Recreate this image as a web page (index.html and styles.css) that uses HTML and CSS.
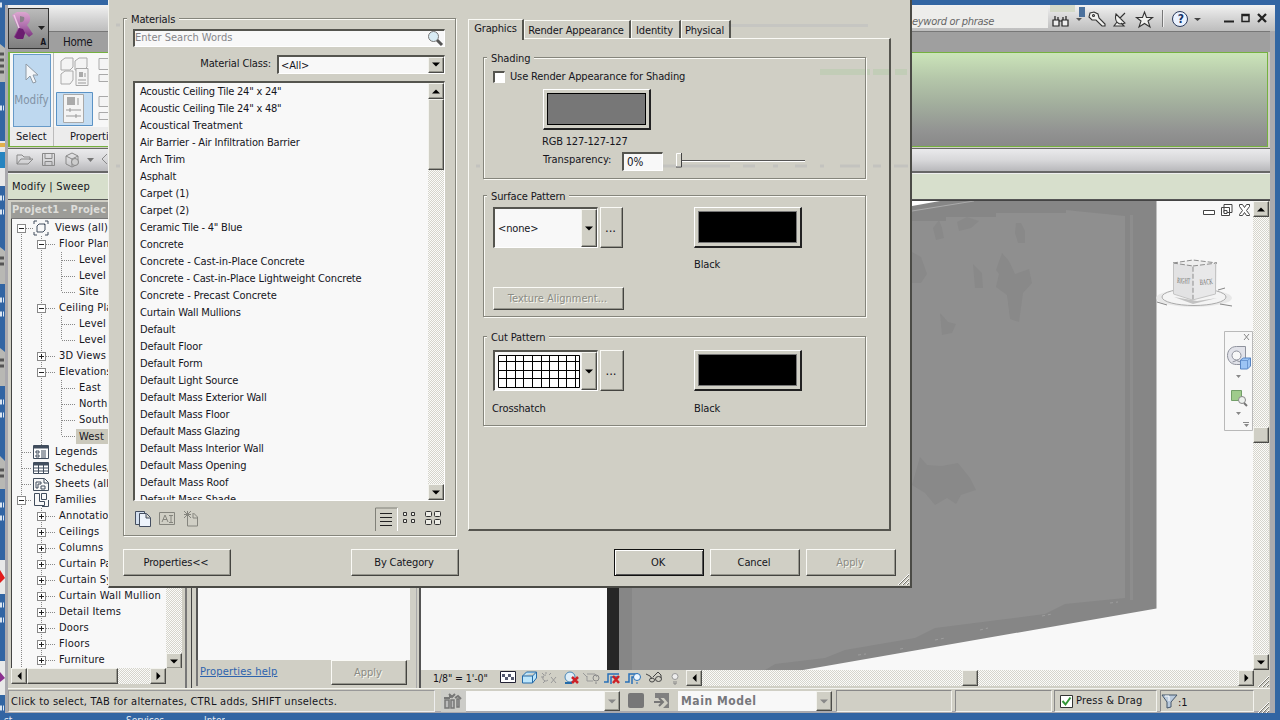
FILE: index.html
```html
<!DOCTYPE html>
<html lang="en">
<head>
<meta charset="utf-8">
<title>Materials</title>
<link rel="stylesheet" href="styles.css">
</head>
<body>
<svg class="defs" width="0" height="0">
  <symbol id="up" viewBox="0 0 8 5"><path d="M0 4.5 4 .5 8 4.5z"/></symbol>
  <symbol id="down" viewBox="0 0 8 5"><path d="M0 .5 4 4.5 8 .5z"/></symbol>
  <symbol id="left" viewBox="0 0 5 8"><path d="M4.5 0 .5 4 4.5 8z"/></symbol>
  <symbol id="right" viewBox="0 0 5 8"><path d="M.5 0 4.5 4 .5 8z"/></symbol>
  <symbol id="grip" viewBox="0 0 12 12"><path d="M1 12 12 1M5 12l7-7M9 12l3-3" stroke="#fff" fill="none"/><path d="M2 12 12 2M6 12l6-6M10 12l2-2" stroke="#77776f" fill="none"/></symbol>
</svg>
<div class="desktop">
  <svg class="desk-icons" width="6" height="720">
    <path d="M0 5h3M0 108h4M0 300h4M0 314h4M0 402h4M0 415h4M0 505h4M0 518h4M0 605h4M0 620h4M0 198h4M0 212h4M0 708h4" stroke="#dce6f2" stroke-width="5" stroke-dasharray="2 1"/>
    <path d="M0 44l5 4v34H0zM0 247l5 4v33H0zM0 348l5 4v34H0zM0 456l5 5v28H0z" fill="#b8b8b4"/><path d="M0 54h4M0 60h4M0 66h4M0 72h4M0 258h4M0 264h4M0 360h4M0 366h4M0 470h4M0 476h4" stroke="#555" stroke-width="3"/>
    <path d="M0 141h5v45H0zM0 560h5v34H0zM0 661h5v34H0z" fill="#e8e8e8"/><path d="M0 152h5v16H0z" fill="#2684c0"/><path d="M0 143h5v4H0z" fill="#e0b04a"/><path d="M0 570l5 8-5 5z" fill="#e21b1b"/><path d="M0 672l5 6-5 4z" fill="#8b2f8f"/>
  </svg>
  <div class="taskstrip"><span>st</span><span>Services</span><span>Inter</span></div>
  <div class="app">
    <header class="titlebar">
      <div class="search-help">eyword or phrase</div>
      <svg class="title-icons" width="225" height="26" viewBox="1050 5 225 26">
        <path d="M1013 5h62v7h-62z" fill="#d4dac9"/><path d="M1079 7h6v10h-6z" fill="#4b719d"/>
        <g fill="#eee" stroke="#222" stroke-width="1.2"><path d="M1053 20h6v6h-6zM1062 20h6v6h-6zM1055 20v-4M1058 20v-3M1063 20v-3M1066 20v-4M1059 21h3"/></g>
        <path d="M1076 18h6l-3 3z" fill="#555"/>
        <g fill="#f0f0ee" stroke="#333" stroke-width="1.1"><path d="M1090 13l4-1 4 2 1 4 6 6v2h-3l-6-6-4 0-3-3z"/><circle cx="1093.500" cy="15.500" r="1"/><path d="M1116 14l9 9c-6 3-11-1-9-9zM1120 18l5-5M1117 22l-3 4h10l-3-3"/><path d="M1144.500 12l2 5.500h6l-4.500 3.500 2 6-5.500-3.500-5.500 3.500 2-6-4.500-3.500h6z"/></g>
        <path d="M1162.500 10v17" stroke="#777"/><path d="M1163.500 10v17" stroke="#eee"/>
        <circle cx="1180" cy="19" r="7.500" fill="#eaf2ff" stroke="#2c3b5c"/><path d="M1194 18h7l-3.500 3z" fill="#444"/>
        <path d="M1224 21.500h10" stroke="#222" stroke-width="2"/><path d="M1242 14.500h7v7h-7zM1242 15.500h7" fill="none" stroke="#222" stroke-width="1.500"/><path d="M1258 14l8 8M1266 14l-8 8" stroke="#222" stroke-width="2.300"/>
      </svg>
      <b class="help-mark">?</b>
    </header>
    <div class="app-button">
      <svg width="39" height="39" viewBox="0 0 39 39"><defs><linearGradient id="rg" x2="0" y2="1"><stop stop-color="#dca6d0"/><stop offset=".5" stop-color="#b070ae"/><stop offset="1" stop-color="#742878"/></linearGradient></defs><path d="M3 6l5-3 8 0c6 1 7 9 2 13l6 9-4 3-4-4-2 6-6 0-3-2 4-9z" fill="url(#rg)"/><path d="M11 7l4 1c1 3-1 6-4 5z" fill="#8a8089"/><path d="M6 28l4-9 4 1 2 4-2 6-5 0z" fill="#6b1d70"/><path d="M5 6l5 13" stroke="#ecc8e4" stroke-width="1.500"/><path d="M29 17h7l-3.500 4z" fill="#222"/></svg>
      <b>A</b>
    </div>
    <nav class="tabs"><span>Home</span></nav>
    <section class="ribbon">
      <div class="panel select">
        <div class="modify"><svg width="16" height="24" viewBox="0 0 16 24"><path d="M2 2v16l4-4 3 7 3-1-3-7h5z" fill="#f3f6f9" stroke="#8f9aa5"/></svg><span>Modify</span></div>
        <footer>Select</footer>
      </div>
      <div class="panel props">
        <svg width="56" height="73" viewBox="0 0 56 73"><path d="M2.500 39.500h36v33h-36z" fill="#c3dcf2" stroke="#5a92c5"/><g fill="#f4f4f4" stroke="#a9a9a9"><path d="M7 8l4-3h8v9l-3 3H7zM21 8l4-3h8v9l-3 3h-9zM7 21l4-3h8v9l-3 4H7z"/><path d="M22 15.500h12v17H22zM9.500 41.500h20v28h-20z"/><path d="M45 5.500h13v11H45zM45 21.500h13v7H45zM45 43.500h13v10H45zM45 59.500h13v7H45z"/></g><path d="M25 19h4v5h-4zM13 44h8v8h-8z" fill="#aaa"/><path d="M31 20v4M24 27h8M24 30h8M24 45v7M12 57h15M12 63h15M16 55v4M22 61v4" stroke="#999" fill="none"/></svg>
        <footer>Properti</footer>
      </div>
    </section>
    <div class="qat">
      <svg width="100" height="22" viewBox="8 149 100 22" fill="none" stroke="#898989"><path d="M17 164v-9h5l2 2h6v3M17 164l4-5h12l-5 5zM42.500 153.500h12v12h-12zM45 153.500v5h7v-5M45 165.500v-4h7v4M66 156l6-3 6 3v8l-6 3-6-3zM66 156l6 3 6-3M72 159v7"/><circle cx="75" cy="162" r="3.500" fill="#ccc"/><path d="M87 158h7l-3.500 4z" fill="#777" stroke="none"/><path d="M107 154l-5 5 5 5"/></svg>
    </div>
    <div class="options">Modify | Sweep</div>
    <main class="work">
      <aside class="browser">
        <h2>Project1 - Projec</h2>
        <div class="browser-main">
          <div class="tree">
            <svg class="guides" width="154" height="448" viewBox="12 220 154 448"><path d="M21.500 228v440M41.500 236v216M61.500 252v40M61.500 316v24M61.500 380v56M41.500 508v160M22 228.500h11M22 452.500h10M22 468.500h10M22 484.500h10M22 500.500h10M42 244.500h14M42 308.500h14M42 356.500h14M42 372.500h14M62 260.500h14M62 276.500h14M62 292.500h14M62 324.500h14M62 340.500h14M62 388.500h14M62 404.500h14M62 420.500h14M62 436.500h14M42 516.500h14M42 532.500h14M42 548.500h14M42 564.500h14M42 580.500h14M42 596.500h14M42 612.500h14M42 628.500h14M42 644.500h14M42 660.500h14" stroke="#888" stroke-dasharray="1 1"/></svg>
            <div class="row r0"><i class="box"></i><svg class="ti" viewBox="0 0 16 16"><path d="M1 4V1h3M12 1h3v3M15 12v3h-3M4 15H1v-3M4 6l2-2h6v6l-2 2H4zM11 4l1 1"/></svg>Views (all)</div>
            <div class="row r1"><i class="box"></i>Floor Plan</div>
            <div class="row r2">Level</div><div class="row r2">Level</div><div class="row r2">Site</div>
            <div class="row r1"><i class="box"></i>Ceiling Pla</div>
            <div class="row r2">Level</div><div class="row r2">Level</div>
            <div class="row r1"><i class="box plus"></i>3D Views</div>
            <div class="row r1"><i class="box"></i>Elevations</div>
            <div class="row r2">East</div><div class="row r2">North</div><div class="row r2">South</div><div class="row r2"><span class="sel">West</span></div>
            <div class="row r0 leaf"><svg class="ti" viewBox="0 0 16 16"><path d="M.5 1.500h15v13H.5z" fill="#fff"/><path d="M1 3h14" stroke-width="3"/><path d="M3 7h3v2H3zM3 11h3v2H3zM8 7h5M8 9h5M8 11h5M8 13h5"/></svg>Legends</div>
            <div class="row r0 leaf"><svg class="ti" viewBox="0 0 16 16"><path d="M.5 2.500h15v11H.5z" fill="#fff"/><path d="M1 4h14" stroke-width="3"/><path d="M1 8h14M1 11h14M5.500 4v10M10.500 4v10"/></svg>Schedules/</div>
            <div class="row r0 leaf"><svg class="ti" viewBox="0 0 16 16"><path d="M.5 2.500h11l4 4v8H.5zM11 3v4h4M3 6h5v2H5v4H3zM8 10h4v3H8z"/></svg>Sheets (all)</div>
            <div class="row r0"><i class="box"></i><svg class="ti" viewBox="0 0 16 16"><path d="M1.500 1.500h5v8h5v4h-10zM8.500 1.500h5v6h-5zM15.500 8v6.500H9"/></svg>Families</div>
            <div class="row r1"><i class="box plus"></i>Annotatio</div><div class="row r1"><i class="box plus"></i>Ceilings</div><div class="row r1"><i class="box plus"></i>Columns</div><div class="row r1"><i class="box plus"></i>Curtain Pa</div><div class="row r1"><i class="box plus"></i>Curtain Sy</div><div class="row r1"><i class="box plus"></i>Curtain Wall Mullion</div><div class="row r1"><i class="box plus"></i>Detail Items</div><div class="row r1"><i class="box plus"></i>Doors</div><div class="row r1"><i class="box plus"></i>Floors</div><div class="row r1"><i class="box plus"></i>Furniture</div>
          </div>
          <div class="vscroll"><i class="sb end"><svg width="8" height="5"><use href="#down"/></svg></i></div>
        </div>
        <div class="hscroll"><i class="sb"><svg width="5" height="8"><use href="#left"/></svg></i><i class="sb thumb"></i><i class="sb end"><svg width="5" height="8"><use href="#right"/></svg></i><i class="corner"></i></div>
      </aside>
      <aside class="properties"><div class="prop-blank"></div><div class="prop-foot"><a>Properties help</a><div class="btn off">Apply</div></div></aside>
      <section class="view">
        <div class="view-main">
          <svg class="model" width="832" height="469" viewBox="421 201 832 469">
            <path d="M421 201h832v469H421z" fill="#f8f8f8"/>
            <path d="M619 201H1156.500V608.500L803 670H619z" fill="#868686"/>
            <path d="M632 201H975l150 15V598l-60 6-20 10-110 14-20 10-70 12-20 8-50 6-10 6H632z" fill="#8f8f8f"/>
            <path d="M800 201h356v7h-90v5h-70v4h-50v4h-46z" fill="#868686"/>
            <path d="M912 201h28l-28 5z" fill="#fff"/><path d="M912 211l62-10" stroke="#aaa"/>
            <path d="M1131.500 215v385" stroke="#8d8d8d" stroke-width="3"/>
            <path d="M607 201h12v469h-12z" fill="#262626"/>
            <g fill="#898989"><path d="M933 228l6-8 3 8 2 10-8 2zM957 222l10-5 12 4-8 7-12 3zM1016 223l5 0 4 8v12h-7l-3-10zM912 252l9 5 6 17-6 9h-9zM973 264l9 9 1 15h-8zM1002 253l7 8 6 13 14-5 3 14-9 10-4 29-9-3-3-24-11-8 3-13-3-4zM940 313l8 9 8 2-4 9-10 2zM920 457l7 8 15 1 16-3 12 15 6 12-15 5-5 9-9-6-12 7-10-12-13-8z"/></g>
            <path d="M1042 616l10-2M980 630l8-2M935 640l10-2M900 649l6-1M858 655l8-1M1110 603l8-1" stroke="#9d9d9d" stroke-dasharray="3 3"/>
            <g fill="#fff" stroke="#444"><path d="M1203.500 210.500h11v4h-11z"/><path d="M1224 204.500h8v8h-8zM1221.500 207.500h8v8h-8z"/><path d="M1224 210.500h3v3h-3z"/><path d="M1239.500 204.500h3l2 3 2-3h3v2l-3 4 3 4v1h-3l-2-3-2 3h-3v-1l3-4-3-4z"/></g>
            <g class="cube"><ellipse cx="1194" cy="298" rx="38" ry="9" fill="#e4e4e4" opacity=".8"/><ellipse cx="1194" cy="297" rx="32" ry="8.500" fill="#f4f4f4" stroke="#aaa"/><path d="M1174 297l19 7 24-6-20 3z" fill="#c2c2c2"/><path d="M1173 263l20 3v34l-19-6z" fill="#e2e2e3"/><path d="M1193 266l24-3-1 31-23 6z" fill="#e8e8e9"/><path d="M1173 263l20-3 24 3-24 3z" fill="#eee"/><path d="M1173 263l20 3v34M1193 266l24-3M1173 263l20-3 24 3" fill="none" stroke="#8d8d8d" stroke-dasharray="5 2"/><path d="M1173.500 263v31l19 6 23-6V263" fill="none" stroke="#c4c4c4"/><path d="M1157 302l10 3M1220 304l12 2M1218 290l7-2" stroke="#888"/>
            <text x="1177" y="283" textLength="13" lengthAdjust="spacingAndGlyphs" transform="rotate(3 1177 285)">RIGHT</text><text x="1200" y="285" textLength="13" lengthAdjust="spacingAndGlyphs" transform="rotate(-5 1200 285)">BACK</text></g>
            <path d="M1224.500 331.500h28v99h-28z" fill="#f7f7f7" stroke="#b9b9b9"/><path d="M1244 334l5 6M1249 334l-5 6" stroke="#888"/>
            <path d="M1245.500 358v-11.500h-9c-12 0-12 18 0 18h5" fill="#e1e2e9" stroke="#8f929d"/><circle cx="1236.500" cy="355.500" r="4.500" fill="#f7f7f7" stroke="#8f929d"/><path d="M1232.500 362q4-3 8 0" fill="none" stroke="#8f929d"/><path d="M1240.500 360l3-2h7v8l-3 3h-7z" fill="#9cc4f4" stroke="#5785c4"/><path d="M1241 360.500h6.500v8M1247.500 360.500l3-2.500" stroke="#5785c4" stroke-width=".7" fill="none"/>
            <path d="M1236 375h5l-2.500 3zM1236 412h5l-2.500 3zM1244 424h5l-2.500 3z" fill="#888"/><path d="M1243 422.500h6" stroke="#888"/><path d="M1231.500 390.500h10v10h-10z" fill="#9fcb8c" stroke="#739f69"/><circle cx="1242" cy="400" r="3.500" fill="#edf1ee" stroke="#888"/><path d="M1244 403l3 3" stroke="#777" stroke-width="2"/>
          </svg>
          <div class="vscroll"><i class="sb"><svg width="8" height="5"><use href="#up"/></svg></i><i class="sb vthumb"></i><i class="sb end"><svg width="8" height="5"><use href="#down"/></svg></i></div>
        </div>
        <div class="view-bar"><span>1/8" = 1'-0"</span>
          <svg width="190" height="16" viewBox="496 670 190 16" fill="none">
            <path d="M500.500 671.500h15v11h-15z" fill="#fff" stroke="#223"/><path d="M502 674h3v3h-3zM508 674h3v3h-3zM505 677h3v3h-3zM511 677h3v3h-3z" fill="#555a70"/>
            <path d="M522.500 676l4-4h10v6l-4 5h-10zM522.500 676h10l4-4M532.500 676v7" fill="#bde6fb" stroke="#246aa8"/>
            <path d="M546 672v2M541 677h3M542 673l2 2M551 673l-2 2M543 683l2-2M546 675a3 3 0 1 0 2 5M551 677l5 6M556 677l-5 6" stroke="#999"/>
            <circle cx="570" cy="677" r="5" fill="#dfeef8" stroke="#4887b8"/><path d="M565 683h7" stroke="#246aa8" stroke-width="2"/><path d="M572 677l6 6M578 677l-6 6" stroke="#cd2027" stroke-width="2.500"/>
            <path d="M583 673l4 4M587 674h8l2 3M587 676v5h6" stroke="#999"/><circle cx="596" cy="678" r="3" stroke="#888"/><path d="M595 683h2" stroke="#888"/>
            <path d="M604 682h4v-8h11M611 684v-7h8M625 682h4v-8h9M632 684v-7h4" stroke="#2770b8" stroke-width="1.500"/><path d="M613 676l6 7M619 676l-6 7" stroke="#cd2027" stroke-width="2.500"/><circle cx="637" cy="677" r="3.500" fill="#eef7ff" stroke="#2770b8"/><path d="M636 683h2" stroke="#2770b8"/>
            <path d="M646 674l4 2 2 3M653 677l5-5 3 3 0 3" stroke="#444"/><ellipse cx="652" cy="680" rx="2.500" ry="2" stroke="#444"/><ellipse cx="658.500" cy="679" rx="3" ry="2.500" stroke="#444"/><circle cx="675" cy="676.500" r="3" fill="#eee" stroke="#999"/><path d="M674 681v3h2v-3" stroke="#888"/>
          </svg>
          <div class="hscroll"><i class="sb"><svg width="5" height="8"><use href="#left"/></svg></i><i class="sb hthumb"></i><i class="sb end"><svg width="5" height="8"><use href="#right"/></svg></i></div><svg class="grip" width="12" height="12"><use href="#grip"/></svg>
        </div>
      </section>
    </main>
    <footer class="status">
      <span class="status-text">Click to select, TAB for alternates, CTRL adds, SHIFT unselects.</span>
      <svg width="25" height="22" viewBox="0 0 25 22"><path d="M0 0h25v22H0z" fill="#ccccc8"/><path d="M4 10h4v8H4zM10 10h3v8h-3zM16 9h2v8h-2z" fill="#bbb" stroke="#777" stroke-width="1.500"/><path d="M3 8h6M9 8V5M8 4l3 3 3-3M14 8l3-2 3 3" fill="none" stroke="#777" stroke-width="2"/></svg>
      <div class="combo blank"><i class="sb"><svg width="8" height="5"><use href="#down"/></svg></i></div>
      <svg width="58" height="22" viewBox="0 0 58 22"><rect x="8" y="3" width="16" height="15" rx="2" fill="#777"/><path d="M35 3h14v15h-6l5-5-4-5h-9z" fill="#808080"/><path d="M34 12h8m-3-4 4 4-4 4" stroke="#777" stroke-width="2" fill="none"/></svg>
      <div class="combo main">Main Model<i class="sb"><svg width="8" height="5"><use href="#down"/></svg></i></div>
      <i class="cell c1"></i><i class="cell c2"></i>
      <span class="cell c3"><svg width="13" height="13"><path d="M.5.5h12v12H.5z" fill="#fff" stroke="#333"/><path d="M2.500 6l3 3.500 5-7" fill="none" stroke="#329636" stroke-width="2"/></svg>Press &amp; Drag</span>
      <span class="cell c4"><svg width="17" height="15"><path d="M1 1h15l-6 7v5l-4 1V8z" fill="#b9cadd" stroke="#45566b"/><path d="M4 2h4v5" fill="none" stroke="#fff"/></svg><span>:1</span></span>
      <svg class="grip" width="12" height="12"><use href="#grip"/></svg>
    </footer>
  </div>

  <div class="dialog">
    <svg class="traces" width="800" height="180" viewBox="108 0 800 180"><path d="M728 25.500h140" stroke="#c6c6c2" stroke-width="3"/><path d="M820 72h50M873 72h16M895 72h12" stroke="#c2cdb7" stroke-width="6"/><path d="M476 166h4M660 166h70M743 166h12M773 166h5M795 166h12M820 166h4M840 166h20M873 166h8M894 166h14M116 25h4M116 166h4" stroke="#c3c3bf" stroke-width="3"/></svg>
    <div class="dlg-main">
      <section class="group materials">
        <h3>Materials</h3>
        <div class="search">Enter Search Words<svg width="17" height="17" viewBox="0 0 17 17"><path d="M10 10l5 5" stroke="#555" stroke-width="3"/><circle cx="6.500" cy="6.500" r="5" fill="#d9ecf4" stroke="#777"/></svg></div>
        <div class="class-row">Material Class:<div class="select-box">&lt;All&gt;<i class="sb"><svg width="8" height="5"><use href="#down"/></svg></i></div></div>
        <div class="list-box">
          <ul><li class="tight">Acoustic Ceiling Tile 24" x 24"</li><li class="tight">Acoustic Ceiling Tile 24" x 48"</li><li class="wider">Acoustical Treatment</li><li>Air Barrier - Air Infiltration Barrier</li><li>Arch Trim</li><li>Asphalt</li><li>Carpet (1)</li><li>Carpet (2)</li><li class="tight">Ceramic Tile - 4" Blue</li><li>Concrete</li><li class="wider">Concrete - Cast-in-Place Concrete</li><li>Concrete - Cast-in-Place Lightweight Concrete</li><li class="wider">Concrete - Precast Concrete</li><li>Curtain Wall Mullions</li><li>Default</li><li>Default Floor</li><li>Default Form</li><li>Default Light Source</li><li>Default Mass Exterior Wall</li><li>Default Mass Floor</li><li class="tight">Default Mass Glazing</li><li>Default Mass Interior Wall</li><li>Default Mass Opening</li><li class="wider">Default Mass Roof</li><li>Default Mass Shade</li></ul>
          <div class="vscroll"><i class="sb"><svg width="8" height="5"><use href="#up"/></svg></i><i class="sb listthumb"></i><i class="sb end"><svg width="8" height="5"><use href="#down"/></svg></i></div>
        </div>
        <svg class="tools" width="312" height="24" viewBox="133 507 312 24" fill="none">
          <path d="M135.500 511.500h9v13h-9z" fill="#d3dfee" stroke="#444e60"/><path d="M139.500 513.500h7l4 4v9h-11zM146 514v4h4" fill="#edf3fb" stroke="#444e60"/>
          <path d="M159.500 512.500h15v12h-15zM162 522l3-7 3 7M163 519.500h4M169 515.500h4M171 515.500v7M169 522.500h4" stroke="#85857e"/>
          <path d="M187.500 518v8h10v-9l-4-4M193 513v5h4M184 511l7 7M191 511l-7 7M184 514.500h7M187.500 511v7" stroke="#85857e"/>
          <path d="M375.500 531v-23h22" stroke="#808078"/><path d="M376 531.500h21.500V508" stroke="#fff"/><path d="M380 513.500h12M380 517.500h12M380 521.500h12M380 525.500h12" stroke="#222"/>
          <g stroke="#333" fill="#ecece5"><path d="M403.500 512.500h3v3h-3zM411.500 512.500h3v3h-3zM403.500 519.500h3v3h-3zM411.500 519.500h3v3h-3z"/><rect x="425.500" y="511.500" width="6" height="5" rx="1"/><rect x="434.500" y="511.500" width="6" height="5" rx="1"/><rect x="425.500" y="519.500" width="6" height="5" rx="1"/><rect x="434.500" y="519.500" width="6" height="5" rx="1"/></g>
        </svg>
      </section>
      <section class="tabbed">
        <div class="dtabs"><span class="on">Graphics</span><span class="t2">Render Appearance</span><span class="t3">Identity</span><span class="t4">Physical</span></div>
        <div class="tabpage">
          <section class="group shading"><h3>Shading</h3>
            <div class="check"><i></i>Use Render Appearance for Shading</div>
            <div class="swatch gray"><i></i></div>
            <div class="rgb">RGB 127-127-127</div>
            <div class="trans"><em>Transparency:</em><span>0%</span><svg width="132" height="16"><path d="M4 8.500h127" stroke="#555"/><path d="M4 9.500h127" stroke="#fff"/><path d="M2.500 1.500h5v13h-5z" fill="#d5d4ca" stroke="#fff"/><path d="M7.500 1v14H2" fill="none" stroke="#444"/></svg></div>
          </section>
          <section class="group surface"><h3>Surface Pattern</h3>
            <div class="pattern-row"><div class="pattern"><span>&lt;none&gt;</span><i class="sb"><svg width="8" height="5"><use href="#down"/></svg></i></div><div class="btn more">...</div><div class="swatch"><i></i></div></div>
            <div class="captions"><span></span><span>Black</span></div>
            <div class="btn off texture">Texture Alignment...</div>
          </section>
          <section class="group cut"><h3>Cut Pattern</h3>
            <div class="pattern-row"><div class="pattern"><svg width="82" height="34"><path d="M.5 1.500h81v32H.5zM0 7.500h82M0 16.500h82M0 24.500h82M8.500 1v32M17.500 1v32M25.500 1v32M34.500 1v32M43.500 1v32M51.500 1v32M60.500 1v32M68.500 1v32M77.500 1v32" fill="#fff" stroke="#000"/></svg><i class="sb"><svg width="8" height="5"><use href="#down"/></svg></i></div><div class="btn more wide">...</div><div class="swatch"><i></i></div></div>
            <div class="captions"><span>Crosshatch</span><span>Black</span></div>
          </section>
        </div>
      </section>
    </div>
    <footer class="dlg-foot"><div class="btn b1">Properties&lt;&lt;</div><div class="btn b2">By Category</div><div class="btn b3 ok">OK</div><div class="btn b4">Cancel</div><div class="btn b4 off">Apply</div></footer>
    <svg class="dlg-grip" width="12" height="12"><use href="#grip"/></svg>
  </div>
</div>
</body>
</html>
```

FILE: styles.css
```css
* { box-sizing: border-box; }
body { margin: 0; overflow: hidden; font: 11px/16px "DejaVu Sans Condensed", "DejaVu Sans", sans-serif; font-stretch: condensed; color: #15151c; }
h2, h3, ul { margin: 0; padding: 0; font-size: inherit; font-weight: normal; list-style: none; }
svg { display: block; flex: none; }
.defs { position: absolute; }
.desktop { position: relative; width: 1280px; height: 720px; overflow: hidden; background: #3265a3; padding: 5px 0 0 5px; }
.desk-icons { position: absolute; left: 0; top: 0; }
.taskstrip { position: absolute; top: 713px; left: 4px; display: flex; color: #e7edf5; white-space: nowrap; height: 7px; overflow: hidden; font-size: 10px; line-height: 16px; }
.taskstrip span:nth-child(1) { width: 122px; }
.taskstrip span:nth-child(2) { width: 78px; }

.app { position: relative; width: 1270px; height: 708px; background: #d0cfc5; border: solid #aaa9ae; border-width: 0 5px 2px 3px; display: flex; flex-direction: column; }
.titlebar { height: 26px; flex: none; display: flex; justify-content: flex-end; align-items: flex-end; margin-right: -5px; background: linear-gradient(#f1f1f1, #d3d3d3 55%, #bdbdbd); position: relative; }
.search-help { width: 148px; height: 20px; margin: 0 2px 3px 0; background: #ededeb; color: #666; font-style: italic; line-height: 27px; padding-left: 12px; letter-spacing: -.3px; }
.help-mark { position: absolute; right: 91px; top: 6px; font-size: 12px; color: #173569; }
.app-button { position: absolute; left: 0; top: 3px; width: 41px; height: 41px; border: 1px solid #333; background: linear-gradient(#bbb, #7e7e7e); z-index: 1; }
.app-button b { position: absolute; right: 2px; bottom: -3px; font-size: 8px; }
.tabs { height: 21px; flex: none; background: #9f9f9f; border-top: 1px solid #777; padding: 1px 55px; line-height: 18px; font-size: 11.500px; letter-spacing: -.3px; }
.ribbon { height: 95px; flex: none; display: flex; border: 1px solid #75b13f; border-left-width: 2px; background: linear-gradient(#cbe4b9, #b4c6a9 28%, #a2ae9d 55%, #929392 84%, #898989); margin-right: 2px; }
.panel { background: #f7f7f7; display: flex; flex-direction: column; justify-content: space-between; }
.select { width: 44px; border-right: 1px solid #bbb; align-items: center; }
.modify { width: 38px; height: 73px; margin-top: 1px; border: 1px solid #679ac8; background: #bed8ef; display: flex; flex-direction: column; align-items: center; color: #8293a5; padding-top: 7px; gap: 6px; font-size: 11.500px; }
.panel footer { height: 19px; align-self: stretch; background: #ececec; padding-left: 6px; line-height: 19px; }
.props { width: 56px; overflow: hidden; }
.props footer { padding-left: 16px; }
.qat { height: 25px; flex: none; background: linear-gradient(#eaeaec, #d8d8da 50%, #b8b8bb); border: solid #676767; border-width: 1px 0 2px; margin-top: 1px; }
.options { height: 27px; flex: none; background: #d7dfcc; line-height: 26px; padding-left: 4px; border-bottom: 1px solid #555; border-top: 1px solid #eee; letter-spacing: .2px; }
.work { height: 488px; flex: none; display: flex; }

.browser { width: 179px; flex: none; padding: 2px 3px 0; border-right: 2px solid #777; }
.browser h2 { height: 17px; background: #9c9c98; color: #dededa; font-weight: bold; padding-left: 1px; white-space: nowrap; overflow: hidden; border-bottom: 1px solid #777; letter-spacing: .1px; }
.browser-main { display: flex; height: 449px; border-left: 1px solid #444; }
.tree { width: 154px; background: #f8f8f8; position: relative; padding-top: 1px; overflow: hidden; letter-spacing: .17px; }
.guides { position: absolute; left: 0; top: 1px; }
.row { height: 16px; position: relative; display: flex; align-items: center; white-space: nowrap; }
.r0 { padding-left: 5px; }
.r0.leaf { padding-left: 21px; }
.r1 { padding-left: 25px; }
.r2 { padding-left: 67px; }
.r1 .box { margin-right: 13px; }
.r0 .box { margin-right: 7px; }
.ti { width: 16px; height: 16px; margin-right: 6px; fill: none; stroke: #414d5d; }
.box { width: 9px; height: 9px; flex: none; border: 1px solid #888; background: linear-gradient(#222, #222) center / 5px 1px no-repeat #fff; }
.box.plus { background: linear-gradient(#222, #222) center / 5px 1px no-repeat, linear-gradient(#222, #222) center / 1px 5px no-repeat #fff; }
.sel { background: #cbc9bc; padding: 0 12px 0 3px; margin-left: -3px; line-height: 15px; }
.vscroll, .hscroll { background: repeating-conic-gradient(#fbfbf9 0 25%, #d5d4cc 0 50%) 0 0 / 2px 2px; display: flex; flex: none; }
.vscroll { width: 16px; flex-direction: column; }
.hscroll { height: 16px; }
.sb { width: 16px; height: 16px; flex: none; background: #d0cfc5; border: 1px solid; border-color: #f3f3ee #4b4b48 #4b4b48 #f3f3ee; box-shadow: inset -1px -1px #999990; display: flex; align-items: center; justify-content: center; }
.vscroll .end { margin-top: auto; }
.hscroll .end { margin-left: auto; }
.hscroll .thumb { width: 91px; }
.browser .vscroll .end { margin-bottom: -1px; }
.browser .vscroll { padding-right: 0; }
.corner { width: 16px; background: #d0cfc5; }
.properties { width: 226px; flex: none; margin-left: 4px; padding: 1px 6px 0 4px; border-left: 1px solid #444; display: flex; flex-direction: column; border-right: 1px solid #aaa; }
.prop-blank { height: 459px; background: #f8f8f8; border-left: 2px solid #555; }
.prop-foot { height: 26px; display: flex; justify-content: space-between; border-left: 2px solid #777; padding: 0 3px 0 2px; }
.prop-foot a { color: #2e63ad; text-decoration: underline; line-height: 23px; letter-spacing: .2px; }
.btn { height: 27px; background: #d0cfc5; border: 1px solid; border-color: #fafaf6 #444440 #444440 #fafaf6; box-shadow: inset -1px -1px #96968d; display: flex; align-items: center; justify-content: center; flex: none; padding-right: 2px; }
.off { color: #8b8b84; text-shadow: 1px 1px #f7f7f0; }
.prop-foot .btn { width: 76px; height: 25px; }
.view { flex: 1; border-left: 2px solid #555; margin-left: 2px; display: flex; flex-direction: column; border-top: 1px solid #444; }
.view-main { height: 469px; display: flex; }
.cube text { font: 8px "Liberation Serif", serif; fill: #666; }
.vthumb { margin-top: 210px; }
.view-bar { display: flex; height: 17px; }
.view-bar > span { width: 75px; padding-left: 12px; line-height: 17px; white-space: nowrap; font-size: 10.500px; letter-spacing: -.1px; }
.view-bar .hscroll { width: 568px; }
.hthumb { margin-left: 260px; }
.grip { align-self: flex-end; margin-left: 3px; }

.status { height: 25px; flex: none; display: flex; align-items: center; border-top: 1px solid #f5f5f0; }
.status-text { width: 427px; height: 22px; border: 1px solid; border-color: #999 #eee #eee #999; padding-left: 2px; line-height: 21px; white-space: nowrap; margin-right: 6px; letter-spacing: .24px; flex: none; }
.combo { height: 20px; background: #f8f8f8; display: flex; justify-content: flex-end; align-items: stretch; flex: none; }
.combo .sb { height: 20px; fill: #888; }
.blank { width: 154px; }
.main { width: 154px; color: #77777c; font: bold 12px/20px "DejaVu Sans Condensed", sans-serif; letter-spacing: .55px; justify-content: space-between; padding-left: 3px; }
.cell { height: 22px; flex: none; border: 1px solid; border-color: #888 #f3f3ee #f3f3ee #888; display: flex; align-items: center; gap: 3px; }
.c1 { width: 116px; margin-left: 4px; }
.c2 { width: 97px; margin-left: 3px; }
.c3 { width: 103px; margin-left: 2px; padding-left: 5px; letter-spacing: .2px; }
.c4 { width: 94px; margin-left: 3px; gap: 0; }
.c4 span { padding-top: 4px; }

.dialog { position: absolute; left: 108px; top: 0; width: 804px; height: 588px; background: #d0cfc5; border: solid; border-width: 0 2px 2px 1px; border-color: #4b4b46 #4b4b46 #4b4b46 #f2f2ec; z-index: 2; letter-spacing: -.13px; }
.dialog .traces { position: absolute; left: -1px; top: 0; }
.dlg-main { display: flex; padding-left: 14px; height: 549px; }
.group { position: relative; border: 1px solid #85857c; box-shadow: 1px 1px #fafaf5, inset 1px 1px #fafaf5; }
.group > h3 { position: absolute; left: 3px; top: -8px; background: #d0cfc5; padding: 0 4px; line-height: 18px; white-space: nowrap; }
.materials { width: 333px; height: 518px; margin-top: 18px; padding: 10px 9px 0; flex: none; }
.search, .select-box, .list-box, .pattern { background: #f8f8f8; border: solid; border-width: 2px 1px 1px 2px; border-color: #55554f #fff #fff #55554f; display: flex; }
.search { height: 18px; width: 312px; color: #85858a; line-height: 14px; justify-content: space-between; letter-spacing: 0; }
.search svg { margin-top: -1px; }
.class-row { display: flex; justify-content: flex-end; align-items: center; gap: 6px; margin-top: 7px; height: 20px; padding-right: 1px; }
.select-box { width: 168px; height: 19px; justify-content: space-between; padding-left: 2px; line-height: 17px; }
.list-box { margin-top: 7px; width: 312px; height: 420px; overflow: hidden; }
.list-box ul { flex: 1; padding-left: 5px; letter-spacing: -.14px; }
.list-box li { height: 17px; line-height: 17px; white-space: nowrap; }
.list-box .tight { letter-spacing: -.23px; }
.list-box .wider { letter-spacing: -.06px; }
.listthumb { height: 71px; }
.tools { margin-top: 6px; }
.tabbed { width: 423px; margin: 19px 0 0 12px; position: relative; }
.dtabs { display: flex; align-items: flex-end; height: 19px; }
.dtabs span { height: 18px; border: solid; border-width: 1px 2px 0 1px; border-color: #fafaf5 #55554f #55554f #fafaf5; display: flex; justify-content: center; align-items: center; white-space: nowrap; padding: 2px 2px 0 0; flex: none; }
.dtabs .on { width: 56px; height: 21px; align-self: flex-start; background: #d0cfc5; position: relative; z-index: 1; padding: 0 0 3px; }
.dtabs .t2 { width: 107px; } .dtabs .t3 { width: 50px; } .dtabs .t4 { width: 50px; }
.tabpage { height: 493px; border: solid; border-width: 1px 2px 2px 1px; border-color: #fafaf5 #55554f #55554f #fafaf5; padding: 18px 14px 0; }
.tabpage .group { width: 383px; }
.shading { height: 122px; padding: 12px 0 0 9px; }
.check { display: flex; align-items: center; gap: 5px; height: 13px; }
.check i { width: 12px; height: 12px; background: #fff; border: solid; border-width: 2px 1px 1px 2px; border-color: #55554f #fff #fff #55554f; }
.swatch { width: 108px; height: 41px; border: solid; border-width: 1px 2px 2px 1px; border-color: #fff #222 #222 #fff; padding: 3px; flex: none; }
.swatch i { display: block; height: 100%; background: #000; border: 1px solid #777; }
.gray { margin: 6px 0 0 50px; }
.gray i { background: #777; border-color: #000; }
.rgb { margin: 4px 0 0 49px; letter-spacing: -.18px; }
.trans { margin: 0 0 0 50px; display: flex; align-items: center; height: 20px; }
.trans em { font-style: normal; width: 70px; letter-spacing: 0; }
.trans span { width: 41px; height: 19px; margin: 2px 11px 0 9px; background: #f8f8f8; border: solid; border-width: 2px 1px 1px 2px; border-color: #55554f #fff #fff #55554f; padding-left: 3px; line-height: 16px; font-size: 11.500px; }
.surface { height: 122px; margin-top: 16px; padding: 11px 0 0 9px; }
.cut { height: 90px; margin-top: 19px; padding: 13px 0 0 9px; }
.pattern-row { display: flex; height: 41px; }
.pattern { width: 105px; height: 41px; justify-content: space-between; align-items: center; padding-left: 3px; }
.pattern span { padding-top: 1px; }
.pattern .sb { height: 38px; }
.more { width: 23px; height: 41px; margin: 0 71px 0 2px; font-size: 13px; letter-spacing: 0; }
.wide { width: 24px; margin-right: 70px; }
.captions { display: flex; margin-top: 9px; }
.captions span:first-child { width: 202px; margin-left: -1px; }
.cut .captions { margin-top: 10px; }
.texture { width: 131px; height: 23px; margin-top: 14px; letter-spacing: 0; }
.dlg-foot { display: flex; padding-left: 14px; }
.b1 { width: 108px; } .b2 { width: 108px; margin-left: 120px; } .b3 { width: 90px; margin-left: 155px; } .b4 { width: 90px; margin-left: 6px; }
.ok { outline: 1px solid #111; outline-offset: -1px; border-color: #111; box-shadow: inset 1px 1px #fff, inset -1px -1px #555; }
.dlg-grip { position: absolute; right: 1px; bottom: 1px; }
```
